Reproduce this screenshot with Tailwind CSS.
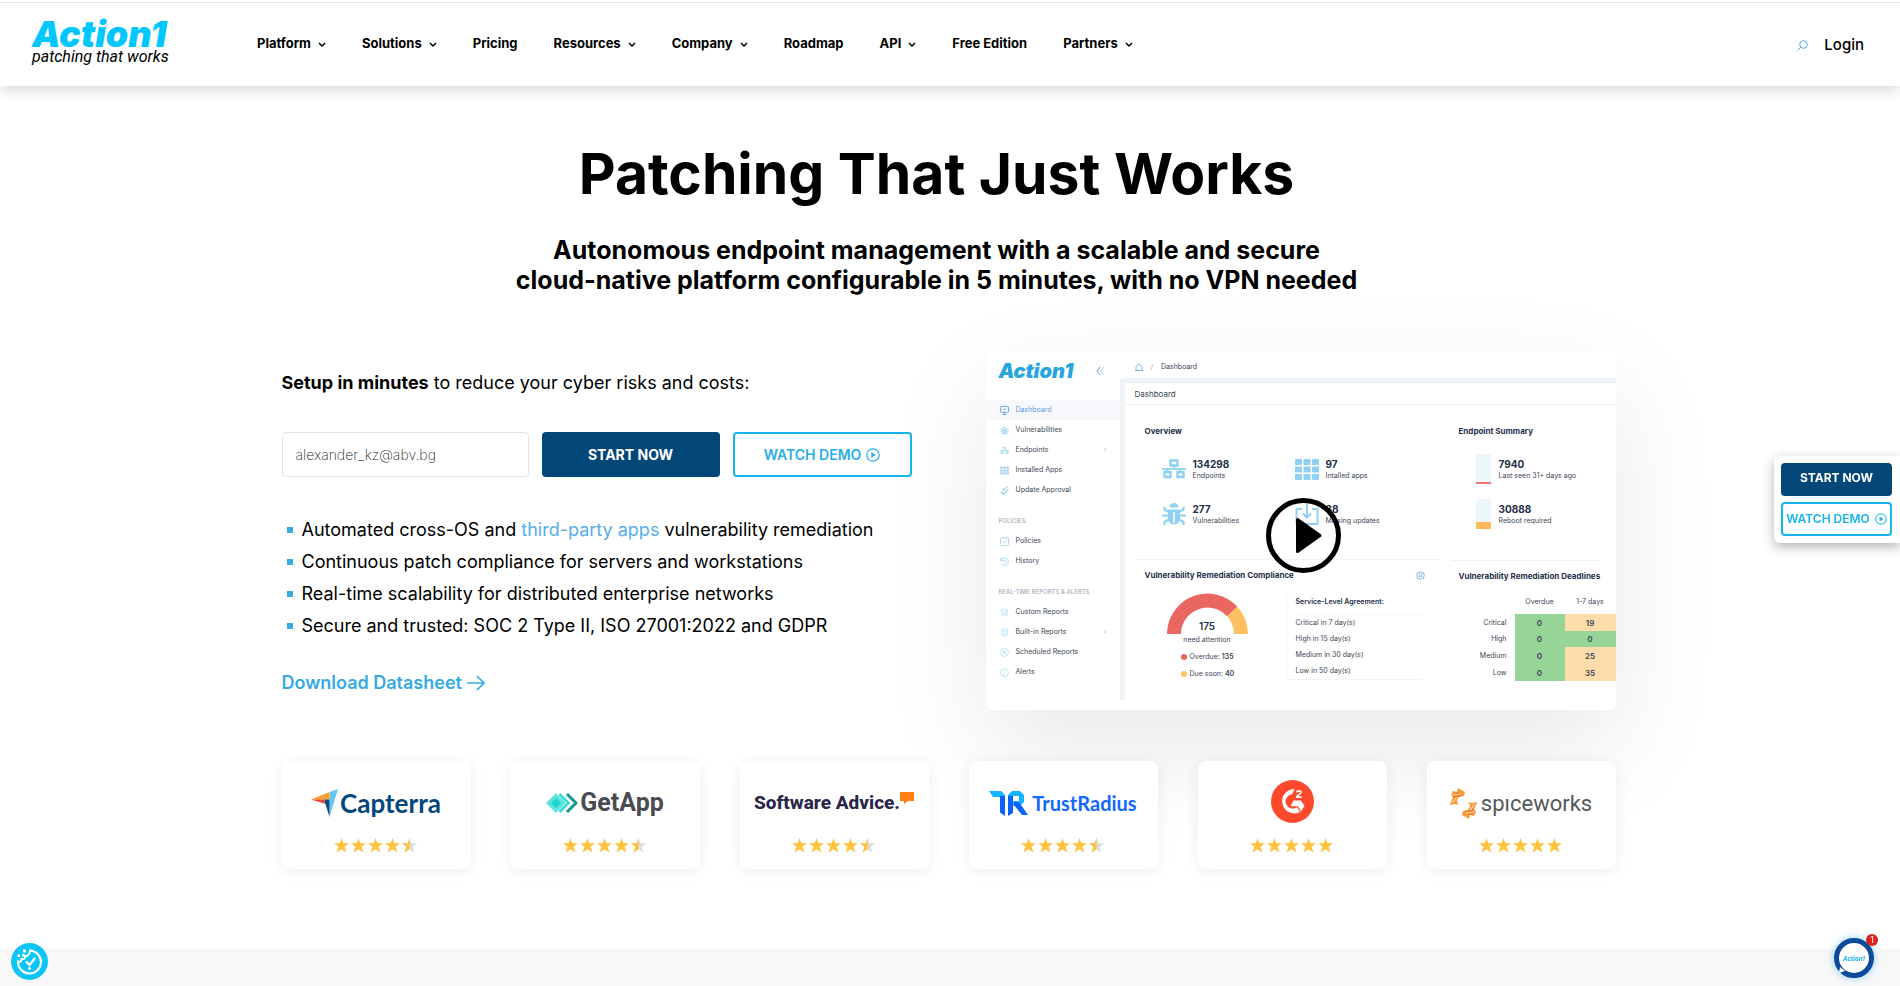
<!DOCTYPE html>
<html lang="en">
<head>
<meta charset="utf-8">
<meta name="viewport" content="width=device-width, initial-scale=1">
<title>Action1 - Patching That Just Works</title>
<script src="https://cdn.jsdelivr.net/npm/@tailwindcss/browser@4"></script>
</head>
<body class="min-h-screen overflow-x-hidden bg-white font-['Inter',sans-serif] text-black">

<svg class="hidden" aria-hidden="true">
  <symbol id="chev" viewBox="0 0 8 6"><path d="M1 1l3 3 3-3" fill="none" stroke="currentColor" stroke-width="1.5"/></symbol>
  <symbol id="star" viewBox="0 0 14 14"><path d="M7 0l1.700 4.900h5.300L9.900 8.200l1.700 5.400L7 10.500 2.400 13.600l1.700-5.400L0 4.900h5.300z"/></symbol>
  <symbol id="rating45" viewBox="0 0 84 15">
    <g fill="#ffc23d"><use href="#star" x="0" width="15" height="15"/><use href="#star" x="17" width="15" height="15"/><use href="#star" x="34" width="15" height="15"/><use href="#star" x="51" width="15" height="15"/></g>
    <use href="#star" x="68" width="15" height="15" fill="#dcdcdc"/>
    <path d="M75.500 0v11.200l-4.900 3.400 1.800-5.800L68 5.200h5.700z" fill="#ffc23d"/>
  </symbol>
  <symbol id="rating5" viewBox="0 0 84 15">
    <g fill="#ffc23d"><use href="#star" x="0" width="15" height="15"/><use href="#star" x="17" width="15" height="15"/><use href="#star" x="34" width="15" height="15"/><use href="#star" x="51" width="15" height="15"/><use href="#star" x="68" width="15" height="15"/></g>
  </symbol>
  <symbol id="play" viewBox="0 0 14 14"><circle cx="7" cy="7" r="6.200" fill="none" stroke="currentColor" stroke-width="1.200"/><path d="M5.300 4v6l4.500-3z" fill="currentColor"/></symbol>
  <symbol id="bug" viewBox="0 0 24 24"><path d="M7.500 5.500a4.500 4.500 0 0 1 9 0z" fill="currentColor"/><path d="M6 7.500h12v9a6 6 0 0 1-12 0z" fill="currentColor"/><path d="M12 10v11" stroke="#fff" stroke-width="1.500"/><path d="M2.500 5v2.500L7 10M21.500 5v2.500L17 10M0 13.500h7M24 13.500h-7M2.500 23v-3L7 17.500M21.500 23v-3L17 17.500" fill="none" stroke="currentColor" stroke-width="2.200"/></symbol>
  <symbol id="net" viewBox="0 0 24 20"><path d="M8.500 1.500h7v5h-7zM2.500 13h6v5h-6zM15.500 13h6v5h-6z" fill="none" stroke="currentColor" stroke-width="2.400"/><path d="M0 9.800h24M12 7v3M5.500 10v3M18.500 10v3" stroke="currentColor" stroke-width="1.800"/></symbol>
  <symbol id="gridi" viewBox="0 0 24 21"><g fill="currentColor"><rect width="7" height="6" rx="1"/><rect x="8.500" width="7" height="6" rx="1"/><rect x="17" width="7" height="6" rx="1"/><rect y="7.500" width="7" height="6" rx="1"/><rect x="8.500" y="7.500" width="7" height="6" rx="1"/><rect x="17" y="7.500" width="7" height="6" rx="1"/><rect y="15" width="7" height="6" rx="1"/><rect x="8.500" y="15" width="7" height="6" rx="1"/><rect x="17" y="15" width="7" height="6" rx="1"/></g></symbol>
  <symbol id="layers" viewBox="0 0 10 10"><path d="M5 .8l4 1.900-4 1.900-4-1.900zM1 5l4 1.900L9 5M1 7.200l4 1.900 4-1.900" fill="none" stroke="currentColor" stroke-width=".8"/></symbol>
</svg>

<header class="relative z-10 flex h-[86px] items-center border-t-2 border-white bg-white pl-8 pr-9 shadow-[0_4px_14px_rgba(0,0,0,0.16)]">
  <div class="absolute inset-x-0 top-0 h-px bg-neutral-200"></div>
  <a href="#" class="block w-[225px] shrink-0">
    <span class="block text-4xl font-black italic leading-[26px] text-[#00c8ff]">Action1</span>
    <span class="block font-[Roboto,sans-serif] text-base italic leading-5">patching that works</span>
  </a>
  <nav class="flex items-center gap-9 text-[13px] font-bold whitespace-nowrap">
    <a href="#" class="flex items-center gap-[7px]">Platform <svg class="mt-0.5 h-1.5 w-2"><use href="#chev"/></svg></a>
    <a href="#" class="flex items-center gap-[7px]">Solutions <svg class="mt-0.5 h-1.5 w-2"><use href="#chev"/></svg></a>
    <a href="#">Pricing</a>
    <a href="#" class="flex items-center gap-[7px]">Resources <svg class="mt-0.5 h-1.5 w-2"><use href="#chev"/></svg></a>
    <a href="#" class="flex items-center gap-[7px]">Company <svg class="mt-0.5 h-1.5 w-2"><use href="#chev"/></svg></a>
    <a href="#">Roadmap</a>
    <a href="#" class="flex items-center gap-[7px]">API <svg class="mt-0.5 h-1.5 w-2"><use href="#chev"/></svg></a>
    <a href="#">Free Edition</a>
    <a href="#" class="flex items-center gap-[7px]">Partners <svg class="mt-0.5 h-1.5 w-2"><use href="#chev"/></svg></a>
  </nav>
  <div class="ml-auto flex items-center gap-4 pt-0.5">
    <button aria-label="Search" class="text-[#4fa8e8]"><svg class="size-[11px]" viewBox="0 0 11 11" fill="none" stroke="currentColor"><circle cx="6.500" cy="4.500" r="3.800"/><path d="M3.800 7.200L.5 10.500"/></svg></button>
    <a href="#" class="text-[15px] font-medium">Login</a>
  </div>
</header>

<div class="pr-[3px]">
<main class="mx-auto max-w-[1334px]">
  <div class="pt-[52px] pr-6 text-center">
    <h1 class="text-[57px] font-bold leading-[72px]">Patching That Just Works</h1>
    <p class="mt-[25px] text-[25px] font-bold leading-[30px]">Autonomous endpoint management with a scalable and secure<br>cloud-native platform configurable in 5 minutes, with no VPN needed</p>
  </div>

  <div class="mt-14 grid grid-cols-2 gap-[74px]">
    <div class="pt-[18px] text-lg leading-7">
      <p><strong class="font-bold">Setup in minutes</strong> to reduce your cyber risks and costs:</p>
      <form class="mt-[35px] flex h-[45px] gap-[13px]">
        <input type="email" aria-label="Email" value="alexander_kz@abv.bg" class="min-w-0 flex-1 rounded border border-neutral-200 px-[13px] text-sm font-extralight text-neutral-800">
        <button type="button" class="w-[178px] rounded bg-[#034678] text-sm font-bold text-white">START NOW</button>
        <button type="button" class="flex w-[179px] items-center justify-center gap-[5px] rounded border-2 border-[#15b5ee] text-sm font-semibold text-[#2aaee8]">WATCH DEMO <svg class="size-[14px]"><use href="#play"/></svg></button>
      </form>
      <ul class="mt-[37px] leading-8">
        <li class="flex items-center gap-[9px] pl-[5px]"><span class="size-1.5 shrink-0 bg-[#36aae2]"></span><span class="whitespace-nowrap">Automated cross-OS and <a href="#" class="text-[#57aee8]">third-party apps</a> vulnerability remediation</span></li>
        <li class="flex items-center gap-[9px] pl-[5px]"><span class="size-1.5 shrink-0 bg-[#36aae2]"></span>Continuous patch compliance for servers and workstations</li>
        <li class="flex items-center gap-[9px] pl-[5px]"><span class="size-1.5 shrink-0 bg-[#36aae2]"></span>Real-time scalability for distributed enterprise networks</li>
        <li class="flex items-center gap-[9px] pl-[5px]"><span class="size-1.5 shrink-0 bg-[#36aae2]"></span>Secure and trusted: SOC 2 Type II, ISO 27001:2022 and GDPR</li>
      </ul>
      <a href="#" class="mt-[27px] flex items-center gap-[5px] font-semibold text-[#36aae2]">Download Datasheet <svg class="h-4 w-[18px]" viewBox="0 0 18 16" fill="none" stroke="currentColor" stroke-width="1.600"><path d="M0 8h17M10 1l7 7-7 7"/></svg></a>
    </div>

    <!-- Product preview -->
    <div class="relative flex h-[359px] overflow-hidden rounded-md bg-white text-[7px] leading-[10px] text-[#3c4654] shadow-[0_40px_110px_rgba(0,0,0,0.09)]">
      <aside class="w-[134px] shrink-0">
        <div class="flex h-[49px] items-center justify-between pl-[13px] pr-4 pb-[9px]">
          <span class="text-xl font-black italic text-[#27a5e0]">Action1</span>
          <svg class="size-2" viewBox="0 0 8 8" fill="none" stroke="#5d9bea"><path d="M4 0L1 4l3 4"/><path d="M7.500 0l-3 4 3 4" opacity=".5"/></svg>
        </div>
        <div class="flex h-5 items-center gap-[7px] bg-[#f7f8fb] pl-[14px] text-[#5d9be0]"><svg class="size-[9px]" viewBox="0 0 10 10" fill="none" stroke="currentColor"><rect x=".5" y=".5" width="9" height="6.500" rx="1"/><path d="M2.500 9.500h5M5 7v2M3 4.500l1.500-1L5.500 4 7 2.500"/></svg>Dashboard</div>
        <div class="flex h-5 items-center gap-[7px] pl-[14px]"><svg class="size-[9px] text-[#a6d5ec]"><use href="#bug"/></svg>Vulnerabilities</div>
        <div class="flex h-5 items-center gap-[7px] pl-[14px] pr-[13px]"><svg class="size-[9px] text-[#a6d5ec]"><use href="#net"/></svg>Endpoints<span class="ml-auto text-[#aab4c0]">›</span></div>
        <div class="flex h-5 items-center gap-[7px] pl-[14px]"><svg class="size-[9px] text-[#a6d5ec]"><use href="#gridi"/></svg>Installed Apps</div>
        <div class="flex h-5 items-center gap-[7px] pl-[14px]"><svg class="size-[9px]" viewBox="0 0 10 10" fill="none" stroke="#a6d5ec" stroke-width="1.600"><path d="M2.500 3l1.500 1.500L8 .8M.8 6l3 3L9.500 3.500"/></svg>Update Approval</div>
        <div class="mt-[11px] flex h-5 items-center pl-[13px] text-[6px] font-medium text-[#a5abba]">POLICIES</div>
        <div class="flex h-5 items-center gap-[7px] pl-[14px]"><svg class="size-[9px]" viewBox="0 0 10 10" fill="none" stroke="#a6d5ec"><rect x=".5" y="1" width="9" height="8.500" rx="1"/><path d="M3 5l1.500 1.500L7.500 4M2.500 0v2M7.500 0v2"/></svg>Policies</div>
        <div class="flex h-5 items-center gap-[7px] pl-[14px]"><svg class="size-[9px]" viewBox="0 0 10 10" fill="none" stroke="#a6d5ec"><path d="M1 1v3h3M1.300 3.500A4.200 4.200 0 1 1 2 8M5.500 2.500V5l2 1"/></svg>History</div>
        <div class="mt-[11px] flex h-5 items-center pl-[13px] text-[6px] font-medium whitespace-nowrap text-[#a5abba]">REAL-TIME REPORTS &amp; ALERTS</div>
        <div class="flex h-5 items-center gap-[7px] pl-[14px]"><svg class="size-[9px] text-[#a6d5ec]"><use href="#layers"/></svg>Custom Reports</div>
        <div class="flex h-5 items-center gap-[7px] pl-[14px] pr-[13px]"><svg class="size-[9px] text-[#a6d5ec]"><use href="#layers"/></svg>Built-in Reports<span class="ml-auto text-[#aab4c0]">›</span></div>
        <div class="flex h-5 items-center gap-[7px] pl-[14px]"><svg class="size-[9px]" viewBox="0 0 10 10" fill="none" stroke="#a6d5ec" stroke-width=".8"><circle cx="5" cy="5" r="4.400"/><path d="M3 3.800h4M3 6.200h4M4 5h2"/></svg>Scheduled Reports</div>
        <div class="flex h-5 items-center gap-[7px] pl-[14px]"><svg class="size-[9px]" viewBox="0 0 10 10" fill="none" stroke="#a6d5ec" stroke-width=".8"><circle cx="5" cy="5" r="4.400"/><path d="M5 2.500v3.200M5 6.700v1"/></svg>Alerts</div>
      </aside>

      <div class="min-w-0 flex-1">
        <div class="flex h-[27px] items-center gap-2 pt-1 pl-[15px]"><svg class="size-2" viewBox="0 0 8 8" fill="none" stroke="#6fa6e6" stroke-width=".8"><path d="M1 7.500V3.500L4 .8l3 2.700v4zM0 7.500h8"/></svg><span class="text-[#9aa3b0]">/</span><span>Dashboard</span></div>
        <div class="h-[322px] border-t-[5px] border-l-[5px] border-[#eff2f6]">
          <div class="flex h-[22px] items-center border-b border-[#eceff3] pl-[10px] text-[8px]">Dashboard</div>
          <div class="flex">
            <!-- Overview and compliance -->
            <div class="w-[326px] shrink-0 pt-[21px]">
              <h2 class="pl-5 text-[8px] font-bold text-[#252f4a]">Overview</h2>
              <div class="mt-[22px] grid grid-cols-[133px_1fr] gap-y-[23px] pl-[37px] text-[#3c4654]">
                <div class="flex h-[22px] items-center gap-[7px]"><svg class="h-5 w-6 text-[#8fd0f3]"><use href="#net"/></svg><div><b class="mb-px block text-[10px] leading-3 font-bold text-[#252f4a]">134298</b>Endpoints</div></div>
                <div class="flex h-[22px] items-center gap-[7px]"><svg class="h-[21px] w-6 text-[#8fd0f3]"><use href="#gridi"/></svg><div><b class="mb-px block text-[10px] leading-3 font-bold text-[#252f4a]">97</b>Intalled apps</div></div>
                <div class="flex h-[22px] items-center gap-[7px]"><svg class="size-6 text-[#8fd0f3]"><use href="#bug"/></svg><div><b class="mb-px block text-[10px] leading-3 font-bold text-[#252f4a]">277</b>Vulnerabilities</div></div>
                <div class="flex h-[22px] items-center gap-[7px]"><svg class="h-[21px] w-6" viewBox="0 0 24 21" fill="none" stroke="#8fd0f3" stroke-width="2"><path d="M7 5H1.500v15h21V5H17M12 0v12M8 9.500l4 4 4-4"/></svg><div><b class="mb-px block text-[10px] leading-3 font-bold text-[#252f4a]">38</b>Missing updates</div></div>
              </div>
              <div class="mx-3 mt-[34px] border-t border-[#f1f3f5]"></div>
              <div class="flex items-center justify-between pt-[10px] pl-5 pr-[26px]">
                <h2 class="text-[8px] font-bold whitespace-nowrap text-[#252f4a]">Vulnerability Remediation Compliance</h2>
                <svg class="size-[9px]" viewBox="0 0 10 10" fill="none" stroke="#69a7e8"><path d="M5 .6l1.500 1.300 2.200.2v2L9.500 5l-.8 1v2l-2.200.2L5 9.400 3.500 8.200 1.300 8V6L.5 5l.8-1V2.100l2.200-.2z"/><circle cx="5" cy="5" r="1.500"/></svg>
              </div>
              <div class="mt-[13px] flex">
                <div class="ml-[42px] w-[81px] text-center">
                  <div class="relative">
                    <svg class="h-[41px] w-[81px]" viewBox="0 0 81 41" fill="none" stroke-width="14"><path d="M7 41a33.500 33.500 0 0 1 58.200-22.500" stroke="#ea6660"/><path d="M65.200 18.500A33.500 33.500 0 0 1 74 41" stroke="#ffc062"/></svg>
                    <b class="absolute inset-x-0 bottom-[3px] text-[10px] font-semibold text-[#252f4a]">175</b>
                  </div>
                  <p class="pt-px">need attention</p>
                  <ul class="mt-[7px] pl-[14px] text-left whitespace-nowrap">
                    <li class="flex items-center gap-[3px]"><span class="size-1.5 rounded-full bg-[#ea6660]"></span><span>Overdue: <b class="font-semibold">135</b></span></li>
                    <li class="mt-[7px] flex items-center gap-[3px]"><span class="size-1.5 rounded-full bg-[#ffc062]"></span><span>Due soon: <b class="font-semibold">40</b></span></li>
                  </ul>
                </div>
                <div class="ml-[38px] h-[87px] w-[137px] border-b border-l border-[#f1f5f7] pl-[9px]">
                  <p class="border-b border-[#f5f7f9] pt-1 pb-[7px] font-semibold text-[#252f4a]">Service-Level Agreement:</p>
                  <ul class="leading-[16px]"><li>Critical in 7 day(s)</li><li>High in 15 day(s)</li><li>Medium in 30 day(s)</li><li>Low in 50 day(s)</li></ul>
                </div>
              </div>
            </div>
            <!-- Endpoint summary and deadlines -->
            <div class="min-w-0 flex-1 pt-[21px]">
              <h2 class="pl-[8px] text-[8px] font-bold text-[#252f4a]">Endpoint Summary</h2>
              <div class="mt-[18px] flex h-[30px] items-center gap-2 pl-[25px]"><span class="h-full w-[15px] border-b-2 border-[#ea7670] bg-[#edf6fa]"></span><div><b class="mb-px block text-[10px] leading-3 font-bold text-[#252f4a]">7940</b>Last seen 31+ days ago</div></div>
              <div class="mt-[15px] flex h-[30px] items-center gap-2 pl-[25px]"><span class="h-full w-[15px] border-b-[7px] border-[#ffb95c] bg-[#edf6fa]"></span><div><b class="mb-px block text-[10px] leading-3 font-bold text-[#252f4a]">30888</b>Reboot required</div></div>
              <div class="mr-4 mt-[31px] border-t border-[#f1f3f5]"></div>
              <h2 class="mt-[10px] pl-[8px] text-[8px] font-bold whitespace-nowrap text-[#252f4a]">Vulnerability Remediation Deadlines</h2>
              <table class="mt-[12px] w-full table-fixed">
                <thead><tr class="h-[21px]"><th class="w-[64px]"></th><th class="w-[50px] pb-1 font-normal">Overdue</th><th class="pb-1 font-normal">1-7 days</th></tr></thead>
                <tbody class="text-center">
                  <tr class="h-[17px]"><td class="pr-2 text-right">Critical</td><td class="bg-[#97d498] text-[8px] font-semibold">0</td><td class="bg-[#ffdcac] text-[8px] font-semibold">19</td></tr>
                  <tr class="h-[16px]"><td class="pr-2 text-right">High</td><td class="bg-[#97d498] text-[8px] font-semibold">0</td><td class="bg-[#97d498] text-[8px] font-semibold">0</td></tr>
                  <tr class="h-[17px]"><td class="pr-2 text-right">Medium</td><td class="bg-[#97d498] text-[8px] font-semibold">0</td><td class="bg-[#ffdcac] text-[8px] font-semibold">25</td></tr>
                  <tr class="h-[17px]"><td class="pr-2 text-right">Low</td><td class="bg-[#97d498] text-[8px] font-semibold">0</td><td class="bg-[#ffdcac] text-[8px] font-semibold">35</td></tr>
                </tbody>
              </table>
            </div>
          </div>
        </div>
      </div>
      <button aria-label="Play video" class="absolute top-[147px] left-[280px]"><svg class="size-[75px]" viewBox="0 0 75 75"><circle cx="37.500" cy="37.500" r="35" fill="none" stroke="#000" stroke-width="5"/><path d="M31.500 21.500v32L54 37.500z" stroke="#000" stroke-width="3" stroke-linejoin="round"/></svg></button>
    </div>
  </div>

  <!-- Review sites -->
  <ul class="relative mt-[51px] grid grid-cols-6 gap-10 pb-20 whitespace-nowrap">
    <li class="flex h-[108px] flex-col items-center rounded-lg bg-white pt-[18px] shadow-[0_2px_16px_rgba(0,0,0,0.07)]">
      <div class="flex h-12 items-center gap-[2px] font-[Lato,sans-serif] text-[26px] font-bold text-[#04477c]"><svg class="h-7 w-[27px]" viewBox="0 0 27 28"><path d="M0 10.500L18.500 3v7.500z" fill="#ff9d28"/><path d="M18.500 3L27 0l-8.500 28z" fill="#68c5ed"/><path d="M18.500 10.500V28L13 10.500z" fill="#044d80"/><path d="M0 10.500h13l1.500 4.500z" fill="#e54747"/></svg>Capterra</div>
      <svg class="mt-[11px] h-[15px] w-[84px]" role="img" aria-label="4.5 stars"><use href="#rating45"/></svg>
    </li>
    <li class="flex h-[108px] flex-col items-center rounded-lg bg-white pt-[18px] shadow-[0_2px_16px_rgba(0,0,0,0.07)]">
      <div class="flex h-12 items-center gap-[2px] font-[Roboto,sans-serif] text-[25px] font-bold text-[#484c52]"><svg class="h-5 w-8" viewBox="0 0 32 20"><path d="M0 10L10 0l10 10-10 10z" fill="#5be5df"/><path d="M5 10l5-5 5 5-5 5z" fill="#1fd3d0"/><g fill="none" stroke-width="2.600"><path d="M13.500 1l9 9-9 9" stroke="#39dad8"/><path d="M17.500 1l9 9-9 9" stroke="#fff" stroke-width="1.200"/><path d="M21 1l9 9-9 9" stroke="#129a94" stroke-width="3"/></g></svg>GetApp</div>
      <svg class="mt-[11px] h-[15px] w-[84px]" role="img" aria-label="4.5 stars"><use href="#rating45"/></svg>
    </li>
    <li class="flex h-[108px] flex-col items-center rounded-lg bg-white pt-[18px] shadow-[0_2px_16px_rgba(0,0,0,0.07)]">
      <div class="flex h-12 items-center font-[Roboto,sans-serif] text-[19px] font-extrabold text-[#2b2649]">Software Advice.<svg class="mb-[10px] h-3 w-[14px]" viewBox="0 0 14 12"><path d="M0 0h14v9H8l-4 3V9H0z" fill="#ff8010"/></svg></div>
      <svg class="mt-[11px] h-[15px] w-[84px]" role="img" aria-label="4.5 stars"><use href="#rating45"/></svg>
    </li>
    <li class="flex h-[108px] flex-col items-center rounded-lg bg-white pt-[18px] shadow-[0_2px_16px_rgba(0,0,0,0.07)]">
      <div class="flex h-12 items-center gap-1 font-[Lato,sans-serif] text-xl font-bold text-[#1268ff]"><svg class="h-[25px] w-[39px]" viewBox="0 0 39 25"><path d="M0 0h12l4 4v2H4z" fill="#12b5ff"/><path d="M11 5h5v20l-5-3.500z" fill="#0b62ff"/><path d="M19 4l4-4h8l4 4v7l-4 4h-7v-5h6V5h-6l-5 3z" fill="#12b5ff"/><path d="M19 5h5v17l-5 3zM25 11h5l9 13h-6l-8-10z" fill="#0b62ff"/></svg>TrustRadius</div>
      <svg class="mt-[11px] h-[15px] w-[84px]" role="img" aria-label="4.5 stars"><use href="#rating45"/></svg>
    </li>
    <li class="flex h-[108px] flex-col items-center rounded-lg bg-white pt-[18px] shadow-[0_2px_16px_rgba(0,0,0,0.07)]">
      <div class="flex h-12 items-center pb-1"><svg class="size-[43px]" viewBox="0 0 43 43" role="img" aria-label="G2"><circle cx="21.500" cy="21.500" r="21.500" fill="#ff492c"/><path d="M23.500 9l-2.300 5.200A7.200 7.200 0 1 0 26 27.200L29 32A12.200 12.200 0 1 1 23.500 9z" fill="#fff"/><path d="M22.500 20.500h7.500l3.500 5.500-3.500 5.500-3-5.200h-7.500z" fill="#fff"/><path d="M25.800 12.300c.4-2 4.200-1.900 4.200.2 0 2-4.300 2.300-4.300 4.700h4.800" fill="none" stroke="#fff" stroke-width="1.700"/></svg></div>
      <svg class="mt-[11px] h-[15px] w-[84px]" role="img" aria-label="5 stars"><use href="#rating5"/></svg>
    </li>
    <li class="flex h-[108px] flex-col items-center rounded-lg bg-white pt-[18px] shadow-[0_2px_16px_rgba(0,0,0,0.07)]">
      <div class="flex h-12 items-center gap-1 font-[Roboto,sans-serif] text-[22px] text-[#55585a]"><svg class="h-[31px] w-[27px]" viewBox="0 0 27 31"><g id="swirl"><path d="M8 0l7 4-1 4-6-3-7 3 2-5 4 1z" fill="#f89a35"/><path d="M1 6l7-2 6 4-5 1-3 4-6 3 3-6z" fill="#f58220"/><path d="M0 17l5-8 3 0-1 5 2 3-4-1z" fill="#f89a35"/><path d="M2 7l9-1M2 15l5-6" stroke="#fff" stroke-width=".8" fill="none"/></g><use href="#swirl" transform="rotate(180 13.500 15.500)"/></svg>spıceworks</div>
      <svg class="mt-[11px] h-[15px] w-[84px]" role="img" aria-label="5 stars"><use href="#rating5"/></svg>
    </li>
  </ul>
</main>
</div>
<div class="h-[38px] bg-[#f8f8f8]"></div>

<!-- Floating call to action -->
<aside class="fixed top-[456px] right-0 z-20 flex w-[126px] flex-col gap-1.5 rounded-l-md bg-white py-[7px] pr-2 pl-[7px] text-xs font-bold whitespace-nowrap shadow-[0_4px_12px_rgba(0,0,0,0.3)]">
  <button class="h-[33px] rounded bg-[#034678] pb-1 text-white">START NOW</button>
  <button class="flex h-[34px] items-center justify-center gap-[5px] rounded border-2 border-[#15b5ee] font-semibold text-[#15b5ee]">WATCH DEMO <svg class="size-3"><use href="#play"/></svg></button>
</aside>

<button aria-label="Cookie settings" class="fixed bottom-[6px] left-[11px]"><svg class="size-[37px]" viewBox="0 0 37 37"><circle cx="18.500" cy="18.500" r="18.500" fill="#0cc5f7"/><path d="M19 7.500a11.500 11.500 0 1 1-12 11c2 1 4-.5 3.500-2.500 2.500.5 4-1 3.500-3 2 .5 5-1.500 5-5.500z" fill="none" stroke="#fff" stroke-width="2"/><path d="M15 18.500l3.500 3.500 5.500-7" fill="none" stroke="#fff" stroke-width="2.400"/><g fill="#fff"><rect x="12" y="6.500" width="3" height="3"/><rect x="6.500" y="11.500" width="2.500" height="2.500"/><rect x="11" y="11" width="2.500" height="2.500"/><circle cx="18.500" cy="25.500" r="1.500"/></g></svg></button>

<button aria-label="Open chat" class="fixed right-[26px] bottom-2 z-20 flex size-10 items-center justify-center rounded-full border-[5px] border-[#0a4b9c] bg-white shadow-[0_0_8px_rgba(80,180,240,0.6)]">
  <svg class="absolute bottom-0 left-0 size-2" viewBox="0 0 8 8"><path d="M0 8l1-6 5 4z" fill="#fff"/></svg>
  <span class="text-[6px] font-extrabold italic text-[#2db4ee]">Action1</span>
  <span class="absolute -top-[9px] -right-[9px] flex size-3 items-center justify-center rounded-full bg-[#d9231c] text-[9px] text-white">1</span>
</button>
</body>
</html>
